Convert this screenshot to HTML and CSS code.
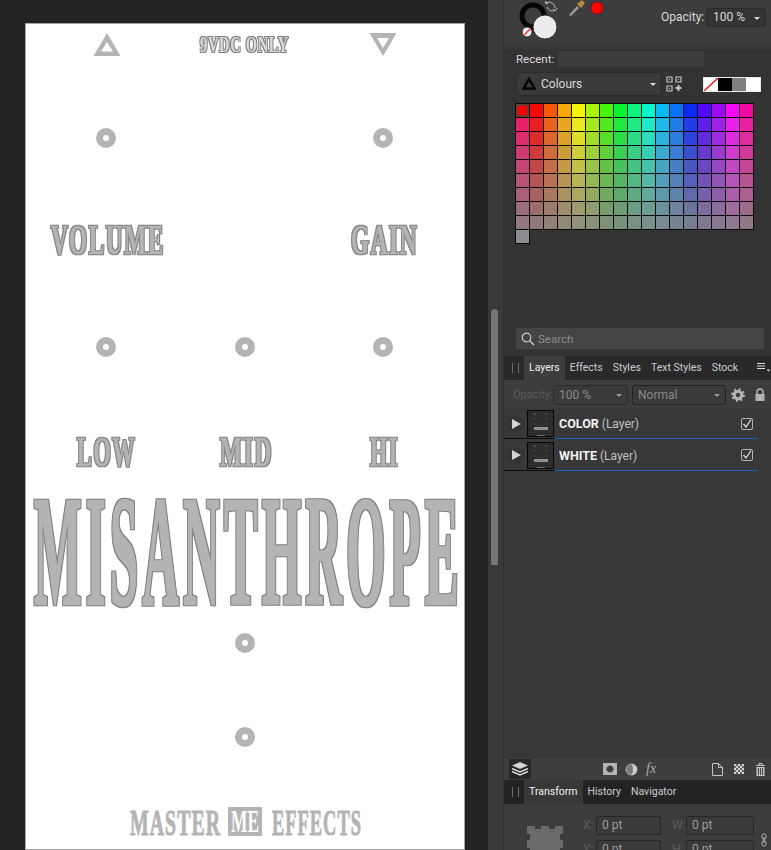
FILE: index.html
```html
<!DOCTYPE html>
<html lang="en">
<head>
<meta charset="utf-8">
<title>Misanthrope</title>
<link rel="stylesheet" href="styles.css">
</head>
<body>
<div class="app">
  <main class="canvas">
    <div class="sheet">
      <svg class="art" viewBox="26 24 438 825" width="438" height="825">
        <defs>
          <filter id="edge" x="-5%" y="-5%" width="110%" height="110%" color-interpolation-filters="sRGB">
            <feMorphology in="SourceAlpha" operator="dilate" radius="0.6" result="fat"/>
            <feFlood flood-color="#808080"/>
            <feComposite in2="fat" operator="in" result="line"/>
            <feMerge><feMergeNode in="line"/><feMergeNode in="SourceGraphic"/></feMerge>
          </filter>
        </defs>
        <path class="mark" fill-rule="evenodd" d="M107 33L120.500 56H93.500ZM107 42L101 51.500H113Z"/>
        <path class="mark" fill-rule="evenodd" d="M369.500 33H396.500L383 56ZM377 38L383 48L389 38Z"/>
        <text class="lbl small" x="200" y="52" textLength="89" lengthAdjust="spacingAndGlyphs">9VDC ONLY</text>
        <g class="holes">
          <circle cx="106" cy="138" r="10"/><circle cx="383" cy="138" r="10"/>
          <circle cx="106" cy="347" r="10"/><circle cx="245" cy="347" r="10"/><circle cx="383" cy="347" r="10"/>
          <circle cx="245" cy="643" r="10"/><circle cx="245" cy="737" r="10"/>
        </g>
        <g class="dots">
          <circle cx="106" cy="138" r="3"/><circle cx="383" cy="138" r="3"/>
          <circle cx="106" cy="347" r="3"/><circle cx="245" cy="347" r="3"/><circle cx="383" cy="347" r="3"/>
          <circle cx="245" cy="643" r="3"/><circle cx="245" cy="737" r="3"/>
        </g>
        <text class="lbl mid" x="51" y="254" textLength="114" lengthAdjust="spacingAndGlyphs">VOLUME</text>
        <text class="lbl mid" x="351" y="254" textLength="67" lengthAdjust="spacingAndGlyphs">GAIN</text>
        <text class="lbl mid" x="77" y="466" textLength="59" lengthAdjust="spacingAndGlyphs">LOW</text>
        <text class="lbl mid" x="220" y="466" textLength="53" lengthAdjust="spacingAndGlyphs">MID</text>
        <text class="lbl mid" x="370" y="466" textLength="29" lengthAdjust="spacingAndGlyphs">HI</text>
        <text class="lbl big" x="34" y="604" textLength="429" lengthAdjust="spacingAndGlyphs">MISANTHROPE</text>
        <text class="foot" x="130" y="835" textLength="91" lengthAdjust="spacingAndGlyphs">MASTER</text>
        <rect class="mark" x="228" y="807" width="34" height="29"/>
        <text class="foot-me" x="231" y="832" textLength="28" lengthAdjust="spacingAndGlyphs">ME</text>
        <text class="foot" x="272" y="835" textLength="90" lengthAdjust="spacingAndGlyphs">EFFECTS</text>
      </svg>
    </div>
  </main>

  <div class="scroll"><div class="thumb"></div></div>

  <aside class="panel">
    <section class="tool">
      <svg class="picker" viewBox="0 0 90 44" width="90" height="44">
        <circle cx="29" cy="16" r="11" fill="none" stroke="#050505" stroke-width="5"/>
        <circle cx="41" cy="27" r="12" fill="#ececec" stroke="#2c2c2c" stroke-width="1"/>
        <circle cx="23" cy="32" r="5" fill="#f2f2f2" stroke="#2a2a2a"/>
        <path d="M19.500 35.500L26.500 28.500" stroke="#f03030" stroke-width="1.500"/>
        <path d="M42 3a6 6 0 0 1 9 5M50 11a6 6 0 0 1-7-4" fill="none" stroke="#bdbdbd"/>
        <path d="M42 1l-1 2 3 1M49 9l2 2 2-3" fill="none" stroke="#bdbdbd"/>
      </svg>
      <svg class="dropper" viewBox="0 0 18 18" width="18" height="18">
        <path d="M1 16L9 7l2 2-8 8z" fill="#9a9a9a"/>
        <path d="M9 5l5-4 3 3-4 5z" fill="#b98a3c"/>
      </svg>
      <span class="red"></span>
      <span class="tool-label">Opacity:</span>
      <div class="select opacity-select">100 %<i class="caret"></i></div>
    </section>

    <section class="colours">
      <div class="recent"><span>Recent:</span><div class="recent-box"></div></div>
      <div class="colour-bar">
        <div class="select colour-select">
          <svg viewBox="0 0 14 14" width="14" height="14"><path d="M7 2L12.500 11.500H1.500Z" fill="none" stroke="#050505" stroke-width="2.500"/></svg>
          <span>Colours</span><i class="caret"></i>
        </div>
        <svg class="grid-icon" viewBox="0 0 16 16" width="16" height="16">
          <path d="M1 1h5v5H1zM10 1h5v5h-5zM1 10h5v5H1z" fill="none" stroke="#c4c4c4" stroke-width="1.200"/>
          <path d="M3 3h1v1H3zM12 3h1v1h-1zM3 12h1v1H3z" fill="#c4c4c4"/>
          <path d="M12.500 9v6M9.500 12h6" stroke="#c4c4c4" stroke-width="2"/>
        </svg>
        <div class="strip">
          <svg viewBox="0 0 14 13" width="14" height="13" preserveAspectRatio="none"><rect width="14" height="13" fill="#fff"/><path d="M0 13L14 0" stroke="#f02020" stroke-width="1.500"/></svg>
          <b class="s-black"></b><b class="s-grey"></b><b class="s-white"></b>
        </div>
      </div>
      <div class="palette" id="palette"></div>
      <div class="search">
        <svg viewBox="0 0 14 14" width="14" height="14"><circle cx="5.500" cy="5.500" r="4.300" fill="none" stroke="#c8c8c8" stroke-width="1.200"/><path d="M8.500 8.500L13 13" stroke="#c8c8c8" stroke-width="1.400"/></svg>
        <span>Search</span>
      </div>
    </section>

    <nav class="tabs">
      <i class="grip"></i>
      <span class="tab on">Layers</span><span class="tab">Effects</span><span class="tab">Styles</span><span class="tab">Text Styles</span><span class="tab">Stock</span>
      <svg class="menu" viewBox="0 0 14 10" width="14" height="10"><path d="M0 1.500h8M0 4h8M0 6.500h8" stroke="#ddd" stroke-width="1.200"/><path d="M10 8h3M11 9h1" stroke="#ddd"/></svg>
    </nav>
    <div class="layer-opts">
      <span class="dim">Opacity:</span>
      <div class="select dis op2">100 %<i class="caret"></i></div>
      <div class="select dis blend">Normal<i class="caret"></i></div>
      <svg viewBox="0 0 14 14" width="14" height="14"><circle cx="7" cy="7" r="3.800" fill="none" stroke="#b4b4b4" stroke-width="3"/><circle cx="7" cy="7" r="6" fill="none" stroke="#b4b4b4" stroke-width="1.800" stroke-dasharray="2 2.700"/></svg>
      <svg class="lock" viewBox="0 0 12 14" width="12" height="14"><path d="M3 6V4a3 3 0 0 1 6 0v2" fill="none" stroke="#b4b4b4" stroke-width="1.500"/><rect x="1.500" y="6" width="9" height="7" fill="#b4b4b4"/></svg>
    </div>
    <div class="layer">
      <span class="disc"><i class="tri"></i></span>
      <div class="thumbnail"><svg viewBox="0 0 26 26" width="26" height="26"><path d="M6 3h2M17 3h2M6 8h1M18 8h1M6 13h1M13 13h1M18 13h1" stroke="#666"/><rect x="6" y="16" width="14" height="3" fill="#8f8f8f"/><rect x="9" y="24" width="8" height="1" fill="#777"/></svg></div>
      <p><b>COLOR</b> (Layer)</p>
      <span class="check"><svg viewBox="0 0 12 12" width="12" height="12"><path d="M2.500 6L5 9L10 1.500" fill="none" stroke="#ddd" stroke-width="1.300"/></svg></span>
    </div>
    <div class="layer">
      <span class="disc"><i class="tri"></i></span>
      <div class="thumbnail"><svg viewBox="0 0 26 26" width="26" height="26"><path d="M6 3h2M17 3h2M6 8h1M18 8h1M6 13h1M13 13h1M18 13h1" stroke="#666"/><rect x="6" y="16" width="14" height="3" fill="#8f8f8f"/><rect x="9" y="24" width="8" height="1" fill="#777"/></svg></div>
      <p><b>WHITE</b> (Layer)</p>
      <span class="check"><svg viewBox="0 0 12 12" width="12" height="12"><path d="M2.500 6L5 9L10 1.500" fill="none" stroke="#ddd" stroke-width="1.300"/></svg></span>
    </div>
    <div class="spacer"></div>
    <div class="actions">
      <span class="stack"><svg viewBox="0 0 18 16" width="18" height="16"><path d="M9 1L17 4.500L9 8L1 4.500Z" fill="#d4d4d4"/><path d="M1 7.500L9 11L17 7.500M1 10.500L9 14L17 10.500" fill="none" stroke="#d4d4d4" stroke-width="1.500"/></svg></span>
      <div class="act-mid">
        <svg viewBox="0 0 14 12" width="14" height="12"><path fill-rule="evenodd" d="M0 0h14v12H0zM7 2.500a3.500 3.500 0 1 0 .01 0z" fill="#b4b4b4"/></svg>
        <svg viewBox="0 0 13 13" width="13" height="13"><circle cx="6.500" cy="6.500" r="5.500" fill="#777" stroke="#b4b4b4"/><path d="M6.500 1a5.500 5.500 0 0 1 0 11c2-3 2-8 0-11z" fill="#ccc"/></svg>
        <span class="fx">fx</span>
      </div>
      <div class="act-right">
        <svg viewBox="0 0 11 13" width="11" height="13"><path d="M.5.500h6l4 4v8H.5zM6.500.500v4h4" fill="none" stroke="#c4c4c4"/></svg>
        <svg class="checker" viewBox="0 0 10 10" width="10" height="10"><rect width="10" height="10" fill="#666"/><path d="M0 0h2v2H0zM4 0h2v2H4zM8 0h2v2H8zM2 2h2v2H2zM6 2h2v2H6zM0 4h2v2H0zM4 4h2v2H4zM8 4h2v2H8zM2 6h2v2H2zM6 6h2v2H6zM0 8h2v2H0zM4 8h2v2H4zM8 8h2v2H8z" fill="#d0d0d0"/></svg>
        <svg viewBox="0 0 11 13" width="11" height="13"><path d="M1 2.500h9M4 2V.500h3V2" fill="none" stroke="#c4c4c4"/><path d="M1.500 4h8v9h-8z" fill="#c4c4c4"/><path d="M3.500 5v7M5.500 5v7M7.500 5v7" stroke="#444"/></svg>
      </div>
    </div>
    <nav class="tabs tabs2">
      <i class="grip"></i>
      <span class="tab on">Transform</span><span class="tab">History</span><span class="tab">Navigator</span>
    </nav>
    <section class="transform">
      <svg class="anchor" viewBox="0 0 36 36" width="36" height="36"><path d="M0 0h8v3h6V0h8v3h6V0h8v8h-3v6h3v8h-3v6h3v8H0v-8h3v-6H0v-8h3V8H0z" fill="#6a6a6a"/></svg>
      <div class="fields">
        <span class="f-l">X:</span><div class="field">0 pt</div>
        <span class="f-l wide">W:</span><div class="field">0 pt</div>
        <span class="f-l">Y:</span><div class="field">0 pt</div>
        <span class="f-l wide">H:</span><div class="field">0 pt</div>
      </div>
      <svg class="chain" viewBox="0 0 6 14" width="6" height="14"><path d="M3 .800a2 2 0 0 1 2 2v1.500a2 2 0 0 1-4 0V2.800a2 2 0 0 1 2-2zM3 7.700a2 2 0 0 1 2 2v1.500a2 2 0 0 1-4 0V9.700a2 2 0 0 1 2-2zM3 4v6" fill="none" stroke="#b0b0b0"/></svg>
    </section>
  </aside>
</div>
<script src="palette.js"></script>
</body>
</html>
```

FILE: styles.css
```css
* { box-sizing: border-box; }
html, body { margin: 0; height: 100%; overflow: hidden; }
body { font: 11.5px Roboto, "Open Sans", sans-serif; color: #d8d8d8; background: #232323; }
p { margin: 0; }
.app { display: flex; width: 771px; height: 850px; overflow: hidden; }

/* document canvas */
.canvas { width: 488px; flex: none; background: #232323; padding: 23px 0 0 25px; }
.sheet { width: 440px; height: 827px; background: #fff; border: 1px solid #a2a2a2; }
.art { display: block; }
.mark { fill: #b4b4b4; }
.holes { fill: #b4b4b4; }
.dots { fill: #fff; }
.lbl { font-family: "Liberation Serif", serif; font-weight: 700; fill: #b4b4b4; stroke: #b4b4b4; filter: url(#edge); }
.small { font-size: 23px; fill: #dcdcdc; stroke: none; letter-spacing: 1px; }
.mid { font-size: 42px; stroke-width: .6; letter-spacing: 3px; }
.big { font-size: 156px; stroke-width: 2.500; letter-spacing: 14px; }
.foot { font: 700 36px "Liberation Serif", serif; fill: #b4b4b4; stroke: #b4b4b4; stroke-width: 1; letter-spacing: 2px; }
.foot-me { font: 700 32px "Liberation Serif", serif; fill: #fff; }

/* scrollbar */
.scroll { width: 15px; flex: none; background: #393939; padding: 309px 3px 0; }
.thumb { width: 7px; height: 256px; background: #767676; border-radius: 4px 4px 0 0; }

/* right panel */
.panel { flex: 1; min-width: 0; background: #383838; border-left: 1px solid #2f2f2f; display: flex; flex-direction: column; }
.tool { height: 44px; flex: none; position: relative; background: #3d3d3d; display: flex; align-items: flex-start; }
.picker { margin-left: 0; flex: none; }
.dropper { margin: -1px 0 0 -26px; flex: none; }
.red { width: 14px; height: 14px; border-radius: 50%; background: #ff0000; border: 1px solid #2c2c2c; margin: 1px 0 0 4px; flex: none; }
.tool-label { margin: 10px 0 0 57px; white-space: nowrap; font-size: 12px; }
.select { position: relative; background: #343434; border: 1px solid #2b2b2b; border-radius: 3px; white-space: nowrap; font-size: 12px; }
.caret { position: absolute; right: 5px; top: 50%; margin-top: -1px; border: 3.500px solid transparent; border-top: 3.500px solid #ddd; border-bottom: 0; }
.opacity-select { width: 60px; height: 19px; margin: 8px 5px 0 auto; padding: 0 0 0 6px; line-height: 17px; }

.colours { height: 307px; flex: none; margin-top: 5px; background: #333; padding: 1px 0 0 12px; }
.recent { display: flex; align-items: center; height: 16px; margin-top: 1px; }
.recent span { width: 42px; font-size: 11.5px; }
.recent-box { width: 146px; height: 16px; background: #3d3d3d; }
.colour-bar { display: flex; align-items: center; margin-top: 5px; height: 24px; }
.colour-select { width: 146px; height: 24px; background: #3a3a3a; display: flex; align-items: center; padding-left: 5px; gap: 5px; }
.grid-icon { margin-left: 4px; flex: none; }
.strip { display: flex; margin-left: 21px; height: 15px; border: 1px solid #e8e8e8; }
.strip b { width: 14px; display: block; }
.s-black { background: #000; }
.s-grey { background: #808080; }
.s-white { background: #fff; }
.palette { display: grid; grid-template-columns: repeat(17, 14px); grid-auto-rows: 14px; width: 239px; margin: 7px 0 0 -1px; }
.swatch { border: 1px solid #0a0a0a; margin: 0 -1px -1px 0; width: 15px; height: 15px; }
.swatch.sel { border: 3px solid #6a3a3a; outline: 1px solid #0a0a0a; outline-offset: -1px; }
.search { display: flex; align-items: center; gap: 3px; width: 248px; height: 21px; margin-top: 85px; padding-left: 5px; background: #444; color: #8e8e8e; font-size: 11.5px; }

.tabs { height: 24px; flex: none; background: #292929; display: flex; align-items: stretch; position: relative; line-height: 24px; font-size: 10.500px; }
.grip { width: 20px; flex: none; position: relative; }
.grip::before { content: ""; position: absolute; left: 8px; top: 7px; width: 5px; height: 10px; border: solid #6a6a6a; border-width: 0 1px; }
.tab { padding: 0 5px; color: #c8ccd4; white-space: nowrap; }
.tab.on { background: #3d3d3d; color: #f0f0f0; }
.menu { position: absolute; right: 0; top: 6px; }

.layer-opts { height: 28px; flex: none; background: #3d3d3d; display: flex; align-items: center; padding: 1px 0 0 9px; }
.dim { color: #5a5a5a; font-size: 11px; width: 40px; }
.dis { height: 20px; line-height: 18px; padding-left: 5px; color: #8a8a8a; background: #3a3a3a; }
.dis .caret { border-top-color: #999; }
.op2 { width: 75px; }
.blend { width: 94px; margin-left: 4px; border-color: #222; margin-right: 5px; }
.lock { margin-left: 9px; }

.layer { height: 31px; flex: none; display: flex; align-items: center; position: relative; padding-top: 1px; border-bottom: 1px solid #0c0c0c; width: 254px; font-size: 12px; }
.layer + .layer { height: 32px; }
.layer::after { content: ""; position: absolute; left: 51px; right: 0; bottom: -1px; height: 1px; background: #1e5fc4; }
.disc { width: 16px; height: 16px; margin-left: 4px; border-radius: 50%; background: #333; display: block; position: relative; flex: none; }
.tri { position: absolute; left: 4px; top: 3px; border: 5px solid transparent; border-left: 9px solid #d4d4d4; border-right: 0; }
.thumbnail { width: 27px; height: 27px; background: #2d2d2d; border: 1px solid #050505; margin-left: 3px; flex: none; overflow: hidden; }
.thumbnail svg { display: block; }
.layer p { margin-left: 5px; flex: 1; white-space: nowrap; color: #c0c0c0; }
.layer p b { color: #f2f2f2; font-size: 12.500px; }
.check { width: 12px; height: 12px; border: 1px solid #b4b4b4; border-radius: 2px; margin-right: 5px; display: block; flex: none; overflow: hidden; }
.check svg { display: block; margin: -1px; }
.spacer { height: 287px; flex: none; background: #383838; }

.actions { height: 22px; flex: none; background: #3e3e3e; display: flex; align-items: center; position: relative; padding-left: 5px; }
.stack { width: 22px; height: 20px; background: #272727; display: flex; align-items: center; justify-content: center; flex: none; }
.act-mid { display: flex; align-items: center; gap: 8px; margin-left: 72px; }
.fx { font: italic 14px "Liberation Serif", serif; color: #a8a8a8; }
.act-right { display: flex; align-items: center; gap: 11px; margin-left: auto; margin-right: 5px; }

.tabs2 { background: #232323; }
.tabs2 .tab.on { background: #383838; }
.transform { flex: 1; background: #3c3c3c; position: relative; overflow: hidden; display: flex; align-items: flex-start; padding: 12px 0 0 23px; }
.anchor { margin-top: 10px; flex: none; }
.fields { display: grid; grid-template-columns: 13px 65px 25px 68px; row-gap: 5px; margin-left: 20px; }
.f-l { color: #5c5c5c; line-height: 19px; font-size: 12px; }
.wide { padding-left: 11px; }
.field { height: 19px; line-height: 17px; padding-left: 5px; background: #3a3a3a; border: 1px solid #262626; border-radius: 2px; color: #9c9c9c; font-size: 12px; }
.chain { margin: 17px 0 0 7px; flex: none; }
```

FILE: palette.js
```js
var hues = [338, 0, 20, 40, 60, 80, 105, 130, 150, 170, 195, 213, 232, 258, 278, 300, 322];
var sats = [92, 82, 72, 60, 50, 40, 30, 20, 10];
var palette = document.getElementById('palette');
sats.forEach(function (s, row) {
  hues.forEach(function (h, col) {
    var cell = document.createElement('div');
    var first = row === 0 && col === 0;
    cell.className = 'swatch' + (first ? ' sel' : '');
    cell.style.background = 'hsl(' + (first ? 0 : h) + ',' + (first ? 100 : s) + '%,' + (row === 0 ? 50 : 52) + '%)';
    palette.appendChild(cell);
  });
});
var grey = document.createElement('div');
grey.className = 'swatch';
grey.style.background = '#8c8c90';
palette.appendChild(grey);
```
